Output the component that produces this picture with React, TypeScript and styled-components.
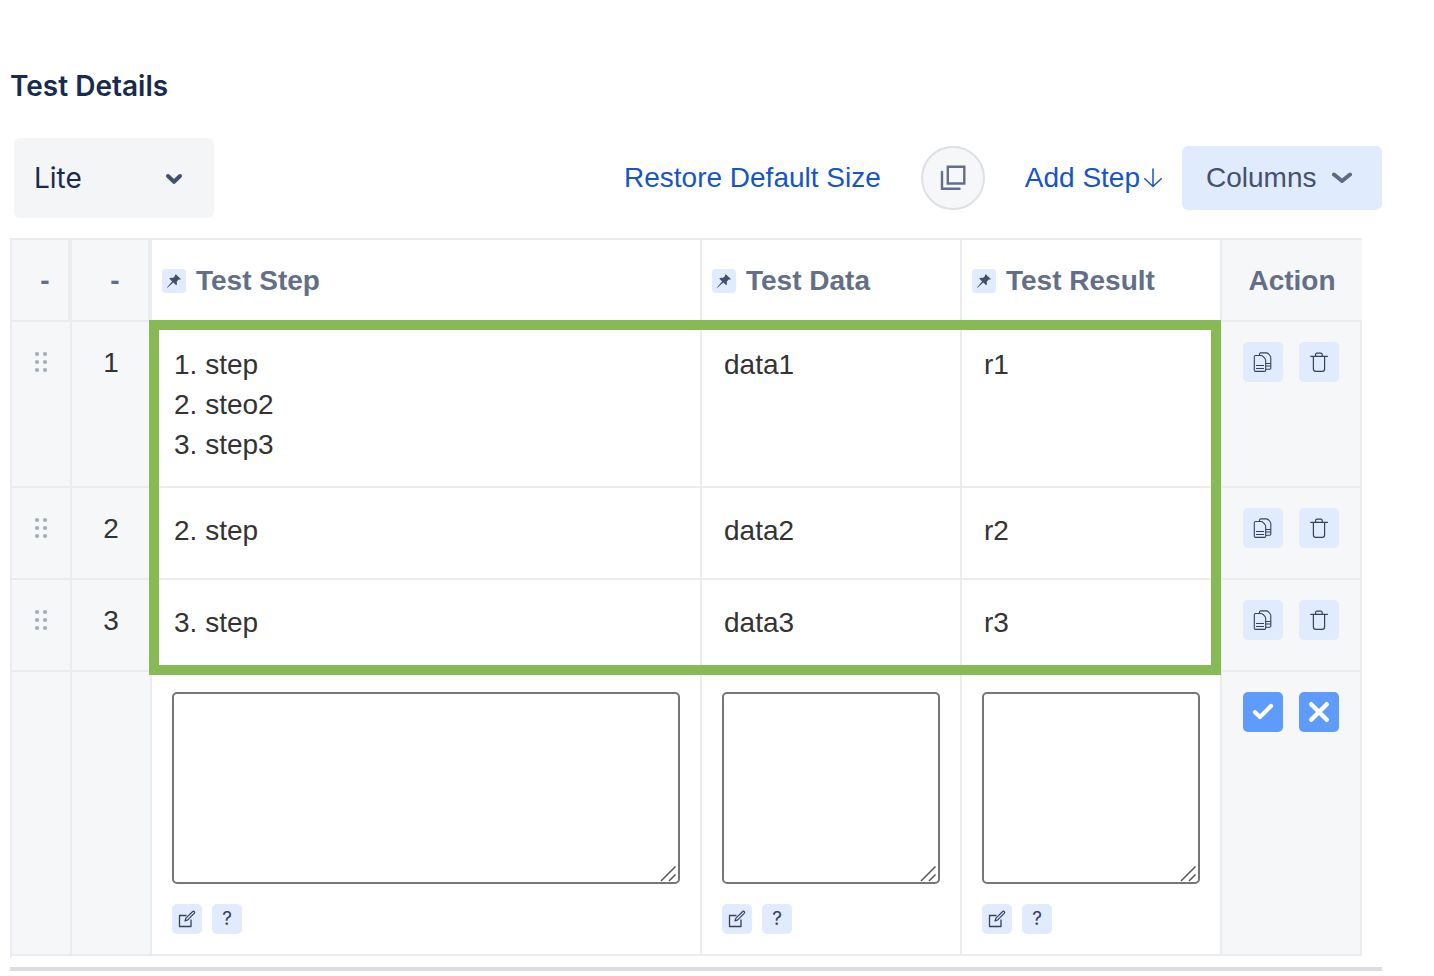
import React from "react";
import styled, { createGlobalStyle, css } from "styled-components";

const color = {
  heading: "#172b4d",
  head: "#626f86",
  text: "#333333",
  link: "#1655c8",
  shade: "#f6f7f9",
  line: "#ebecf0",
  tint: "#e0ebfd",
  blue: "#5f9bfa",
  mark: "#87b955",
  icon: "#35415f",
};

const GlobalStyle = createGlobalStyle`
  *, *::before, *::after { box-sizing: border-box; }
  body {
    margin: 0;
    background: #ffffff;
    color: ${color.text};
    font-family: "Liberation Sans", Arial, sans-serif;
    font-size: 28px;
    line-height: 40px;
  }
  button, select, textarea { font: inherit; }
  svg { display: block; }
`;

const Page = styled.main`
  padding: 66px 52px 5px 10px;
`;

const Title = styled.h1`
  margin: 0 0 32px;
  color: ${color.heading};
  font-family: Inter, sans-serif;
  font-size: 28px;
  font-weight: 600;
  line-height: 40px;
`;

const Toolbar = styled.div`
  display: flex;
  align-items: center;
  justify-content: space-between;
  margin: 0 0 20px 4px;
`;

const ToolbarActions = styled.div`
  display: flex;
  align-items: center;
  gap: 40px;
`;

const AddGroup = styled.div`
  display: flex;
  align-items: center;
  gap: 20px;
`;

const SelectBox = styled.div`
  position: relative;
  width: 200px;

  svg {
    position: absolute;
    top: 30px;
    right: 30px;
    pointer-events: none;
  }
`;

const ViewSelect = styled.select`
  appearance: none;
  width: 100%;
  height: 80px;
  padding: 0 60px 0 20px;
  border: 0;
  border-radius: 6px;
  background: #f4f5f7;
  color: ${color.heading};
  font-family: Inter, sans-serif;
`;

const TextButton = styled.button`
  display: flex;
  align-items: center;
  gap: 4px;
  padding: 0;
  border: 0;
  background: none;
  color: ${color.link};
  line-height: 42px;
  cursor: pointer;
`;

const RoundButton = styled.button`
  width: 64px;
  height: 64px;
  padding: 0;
  border: 2px solid #dfe0e4;
  border-radius: 50%;
  background: ${color.shade};
  cursor: pointer;

  svg {
    margin: auto;
  }
`;

const ColumnsButton = styled.button`
  display: flex;
  align-items: center;
  justify-content: space-between;
  width: 200px;
  height: 64px;
  padding: 0 30px 0 24px;
  border: 0;
  border-radius: 6px;
  background: ${color.tint};
  color: #44526d;
  cursor: pointer;
`;

const TableFrame = styled.div`
  position: relative;
  margin-right: 20px;
  padding-bottom: 2px;
  border: solid ${color.line};
  border-width: 2px 0 0 2px;
`;

const Table = styled.table`
  width: 100%;
  table-layout: fixed;
  border-spacing: 0;
`;

const Col = styled.col<{ $width?: number }>`
  ${(p) => p.$width && css`width: ${p.$width}px;`}
`;

const HeadCell = styled.th<{ $kind?: "index" | "action" }>`
  height: 82px;
  padding: 2px 10px 0;
  border: solid ${color.line};
  border-width: 0 2px 2px 0;
  color: ${color.head};
  text-align: left;
  ${(p) =>
    p.$kind === "index" &&
    css`
      padding: 2px 0 0 10px;
      border-right-width: 4px;
      background: ${color.shade};
      text-align: center;
    `}
  ${(p) =>
    p.$kind === "action" &&
    css`
      padding: 2px 0 0;
      border-right-width: 0;
      background: ${color.shade};
      text-align: center;
    `}
`;

const HeadLabel = styled.div`
  display: flex;
  align-items: center;
  gap: 10px;
`;

const PinButton = styled.button`
  width: 24px;
  height: 24px;
  padding: 0;
  border: 0;
  border-radius: 4px;
  background: ${color.tint};
  cursor: pointer;
`;

const Cell = styled.td<{ $kind?: "side" | "editor" }>`
  height: 92px;
  padding: 23px 22px 21px;
  border: solid ${color.line};
  border-width: 0 2px 2px 0;
  vertical-align: top;
  ${(p) =>
    p.$kind === "side" &&
    css`
      padding: 20px 0;
      background: ${color.shade};
      line-height: 42px;
      text-align: center;
    `}
  ${(p) => p.$kind === "editor" && css`padding: 20px;`}
`;

const Line = styled.div`
  min-height: 40px;
`;

const DragHandle = styled.button`
  display: block;
  width: 20px;
  height: 40px;
  margin: 0 auto;
  padding: 0;
  border: 0;
  background: none;
  cursor: grab;
`;

const CellActions = styled.div`
  display: flex;
  justify-content: center;
  gap: 16px;
`;

const IconButton = styled.button<{ $primary?: boolean }>`
  width: 40px;
  height: 40px;
  padding: 0;
  border: 0;
  border-radius: 5px;
  background: ${(p) => (p.$primary ? color.blue : color.tint)};
  cursor: pointer;
`;

const EditorBox = styled.div`
  position: relative;
  margin-bottom: 20px;

  svg {
    position: absolute;
    right: 2px;
    bottom: 2px;
    pointer-events: none;
  }
`;

const Editor = styled.textarea`
  display: block;
  width: 100%;
  height: 192px;
  padding: 8px;
  border: 2px solid #767676;
  border-radius: 5px;
  background: #ffffff;
  color: inherit;
  resize: none;
`;

const EditorTools = styled.div`
  display: flex;
  gap: 10px;
`;

const SmallButton = styled.button`
  width: 30px;
  height: 30px;
  padding: 0;
  border: 0;
  border-radius: 5px;
  background: ${color.tint};
  color: ${color.icon};
  font-family: Inter, sans-serif;
  font-size: 19px;
  line-height: 30px;
  text-align: center;
  cursor: pointer;
`;

const Highlight = styled.div`
  position: absolute;
  top: 80px;
  right: 141px;
  bottom: 283px;
  left: 137px;
  border: 10px solid ${color.mark};
  pointer-events: none;
`;

const ScrollTrack = styled.div`
  height: 4px;
  margin-top: 9px;
  background: #dddee4;
`;

const Chevron = ({ wide }: { wide?: boolean }) => (
  <svg width="20" height="20" viewBox="0 0 20 20" fill="none" stroke={wide ? "#5d6a83" : "#42526e"} strokeWidth="4" strokeLinecap="round" strokeLinejoin="round">
    <path d={wide ? "M2 6.500 10 13 18 6.500" : "M4 8 10 13.800 16 8"} />
  </svg>
);

const ArrowDown = () => (
  <svg width="18" height="20" viewBox="0 0 18 20" fill="none" stroke={color.link} strokeWidth="1.5" strokeLinecap="round">
    <path d="M9 1v17.5M.8 10.8 9 18.5l8.2-7.7" />
  </svg>
);

const CloneIcon = () => (
  <svg width="28" height="28" viewBox="0 0 28 28" fill="none" stroke="#626f8a" strokeWidth="2.4">
    <path d="M8.800 2.700h16.500v16.800H8.800zM3 8v16.700H20.500" strokeLinecap="round" />
  </svg>
);

const PinIcon = () => (
  <svg width="24" height="24" viewBox="0 0 24 24">
    <path
      d="M13.800 5.200 19 10.300c-.8.5-1.600.3-2.300.1l-2 2.300c.5 1.700.2 2.800-.5 3.500l-2.900-2.700-5.900 5.300-.5-.4 5.200-6-2.900-2.800c1-.9 2.400-.9 3.600-.5l2.300-2c-.3-.8-.1-1.400.7-1.900z"
      fill="#42506c"
    />
  </svg>
);

const GripIcon = () => (
  <svg width="20" height="40" viewBox="0 0 20 40" fill="#a5adba">
    {[12, 20, 28].map((y) => (
      <g key={y}>
        <circle cx="6" cy={y} r="2.1" />
        <circle cx="14" cy={y} r="2.1" />
      </g>
    ))}
  </svg>
);

const CopyIcon = () => (
  <svg width="40" height="40" viewBox="0 0 40 40" fill="none" stroke={color.icon} strokeWidth="1.1">
    <path d="M12.500 13.500h5.200c1.200 0 2 .4 2.800 1.300l1.200 1.400c.7.800 1 1.600 1 2.600v9.400c0 .8-.4 1.200-1.200 1.200h-9c-.8 0-1.200-.4-1.200-1.200V14.700c0-.8.4-1.200 1.200-1.200z" />
    <path d="M16.500 13.500v-1.300c0-.8.4-1.300 1.200-1.300h5.400c1.100 0 1.900.4 2.600 1.200l1.200 1.400c.6.700.9 1.500.9 2.400v10.200c0 .8-.4 1.200-1.200 1.200h-3.900" />
    <path d="M13 23.500h8M13 26.500h8M22.700 21.500h5M22.700 24h5" />
  </svg>
);

const TrashIcon = () => (
  <svg width="40" height="40" viewBox="0 0 40 40" fill="none" stroke={color.icon} strokeWidth="1.2" strokeLinecap="round">
    <path d="M11.800 14.400h16.600M16.600 14v-1.400c0-.9.600-1.500 1.500-1.500h3.600c.9 0 1.500.6 1.500 1.500V14M14.400 14.700v12.300c0 1.600.9 2.400 2.400 2.400h6.400c1.500 0 2.400-.8 2.400-2.400V14.700" />
  </svg>
);

const CheckIcon = () => (
  <svg width="40" height="40" viewBox="0 0 40 40" fill="none" stroke="#ffffff" strokeWidth="4.200" strokeLinecap="round" strokeLinejoin="round">
    <path d="M12 20.300 17 25 28 14" />
  </svg>
);

const CrossIcon = () => (
  <svg width="40" height="40" viewBox="0 0 40 40" fill="none" stroke="#ffffff" strokeWidth="4.400" strokeLinecap="round">
    <path d="m12.200 12.200 15.600 15.600M27.800 12.200 12.200 27.800" />
  </svg>
);

const EditIcon = () => (
  <svg width="30" height="30" viewBox="0 0 30 30" fill="none" stroke={color.icon} strokeWidth="1.300" strokeLinejoin="round">
    <path d="M14.500 11.500H7.500v11h11.500V15.500" />
    <path d="m13 17 .9-2.900 6.600-6.400c.6-.6 1.300-.6 1.800-.1s.5 1.200-.1 1.800l-6.500 6.500z" strokeWidth="1.200" />
  </svg>
);

const ResizeGrip = () => (
  <svg width="18" height="18" viewBox="0 0 18 18" fill="none" stroke="#555555" strokeWidth="1.500">
    <path d="M1 17 15.500 2.500M9 17l6.500-6.500" />
  </svg>
);

const steps = [
  { lines: ["1. step", "2. steo2", "3. step3"], data: "data1", result: "r1" },
  { lines: ["2. step"], data: "data2", result: "r2" },
  { lines: ["3. step"], data: "data3", result: "r3" },
];

const fields = ["Test Step", "Test Data", "Test Result"];

export default function App() {
  return (
    <>
      <GlobalStyle />
      <Page>
        <Title>Test Details</Title>
        <Toolbar>
          <SelectBox>
            <ViewSelect aria-label="View" defaultValue="Lite">
              <option>Lite</option>
            </ViewSelect>
            <Chevron />
          </SelectBox>
          <ToolbarActions>
            <TextButton type="button">Restore Default Size</TextButton>
            <RoundButton type="button" aria-label="Clone">
              <CloneIcon />
            </RoundButton>
            <AddGroup>
              <TextButton type="button">
                Add Step
                <ArrowDown />
              </TextButton>
              <ColumnsButton type="button">
                Columns
                <Chevron wide />
              </ColumnsButton>
            </AddGroup>
          </ToolbarActions>
        </Toolbar>

        <TableFrame>
          <Table>
            <colgroup>
              <Col $width={60} />
              <Col $width={80} />
              <Col />
              <Col $width={260} />
              <Col $width={260} />
              <Col $width={140} />
            </colgroup>
            <thead>
              <tr>
                <HeadCell $kind="index">-</HeadCell>
                <HeadCell $kind="index">-</HeadCell>
                {fields.map((name) => (
                  <HeadCell key={name}>
                    <HeadLabel>
                      <PinButton type="button" aria-label={`Pin ${name}`}>
                        <PinIcon />
                      </PinButton>
                      {name}
                    </HeadLabel>
                  </HeadCell>
                ))}
                <HeadCell $kind="action">Action</HeadCell>
              </tr>
            </thead>
            <tbody>
              {steps.map((step, i) => (
                <tr key={step.data}>
                  <Cell $kind="side">
                    <DragHandle type="button" aria-label={`Move step ${i + 1}`}>
                      <GripIcon />
                    </DragHandle>
                  </Cell>
                  <Cell $kind="side">{i + 1}</Cell>
                  <Cell>
                    {step.lines.map((line) => (
                      <Line key={line}>{line}</Line>
                    ))}
                  </Cell>
                  <Cell>{step.data}</Cell>
                  <Cell>{step.result}</Cell>
                  <Cell $kind="side">
                    <CellActions>
                      <IconButton type="button" aria-label="Copy step">
                        <CopyIcon />
                      </IconButton>
                      <IconButton type="button" aria-label="Delete step">
                        <TrashIcon />
                      </IconButton>
                    </CellActions>
                  </Cell>
                </tr>
              ))}
              <tr>
                <Cell $kind="side" />
                <Cell $kind="side" />
                {fields.map((name) => (
                  <Cell key={name} $kind="editor">
                    <EditorBox>
                      <Editor aria-label={name} />
                      <ResizeGrip />
                    </EditorBox>
                    <EditorTools>
                      <SmallButton type="button" aria-label={`Edit ${name}`}>
                        <EditIcon />
                      </SmallButton>
                      <SmallButton type="button">?</SmallButton>
                    </EditorTools>
                  </Cell>
                ))}
                <Cell $kind="side">
                  <CellActions>
                    <IconButton type="button" $primary aria-label="Save step">
                      <CheckIcon />
                    </IconButton>
                    <IconButton type="button" $primary aria-label="Cancel">
                      <CrossIcon />
                    </IconButton>
                  </CellActions>
                </Cell>
              </tr>
            </tbody>
          </Table>
          <Highlight />
        </TableFrame>
        <ScrollTrack />
      </Page>
    </>
  );
}
